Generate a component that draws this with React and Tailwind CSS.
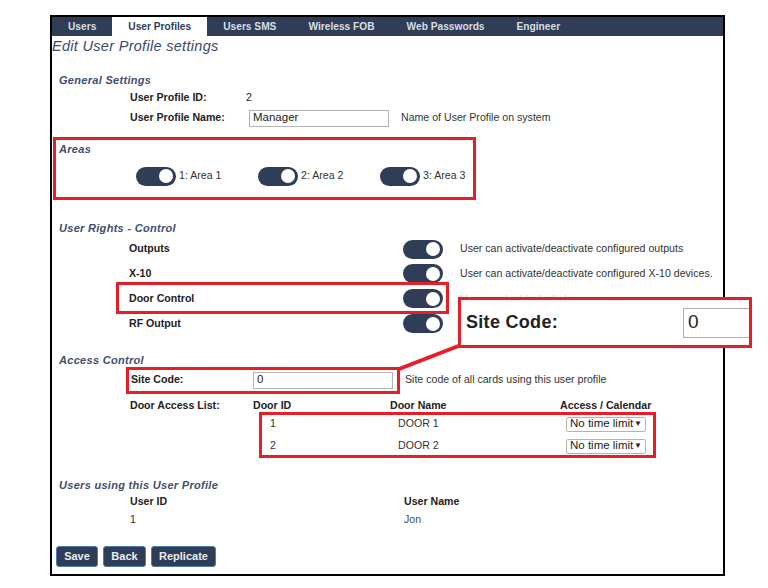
const navy = 'bg-[#2f3d56]';

function Toggle() {
  return (
    <div className="w-[40px] h-[19px] rounded-full bg-[#2f3d56] flex items-center justify-end pr-[3px] shrink-0">
      <div className="w-[14px] h-[14px] rounded-full bg-white" />
    </div>
  );
}

function SectionTitle({ children, className = '' }) {
  return (
    <div className={`h-[16px] flex items-center pl-[7px] text-[11px] font-bold italic text-[#3e4d70] tracking-[0.3px] ${className}`}>
      {children}
    </div>
  );
}

function TimeSelect() {
  return (
    <div className="w-[80px] h-[15px] border border-[#b5b5b5] rounded-[2px] bg-white flex items-center justify-between px-[3px] text-[11.5px] text-[#222]">
      <span>No time limit</span>
      <span className="text-[8px]">▼</span>
    </div>
  );
}

const tabs = ['Users', 'User Profiles', 'Users SMS', 'Wireless FOB', 'Web Passwords', 'Engineer'];

const rights = [
  { label: 'Outputs', desc: 'User can activate/deactivate configured outputs', h: 'h-[24px] mt-[1px]' },
  { label: 'X-10', desc: 'User can activate/deactivate configured X-10 devices.', h: 'h-[25px]' },
  { label: 'Door Control', desc: 'User can lock/unlock doors', h: 'h-[25px]', faded: true },
  { label: 'RF Output', desc: '', h: 'h-[25px]' },
];

export default function App() {
  return (
    <div className="relative w-[768px] h-[588px] bg-white font-['Liberation_Sans',Arial,sans-serif] text-[10.6px] text-[#333] overflow-hidden">
      {/* Frame */}
      <div className="absolute left-[50px] top-[15px] w-[675px] h-[561px] border-2 border-black bg-white flex flex-col">
        {/* Tabs */}
        <div className={`h-[19px] ${navy} flex items-stretch shrink-0`}>
          {tabs.map((t) => (
            <div
              key={t}
              className={`px-[16px] flex items-center text-[10.2px] font-bold ${
                t === 'User Profiles' ? 'bg-white text-[#2f3d56]' : 'text-[#d9dee6]'
              }`}
            >
              {t}
            </div>
          ))}
        </div>

        <div className="h-[22px] flex items-center text-[14.5px] italic text-[#3a4a6e] tracking-[0.3px]">
          Edit User Profile settings
        </div>

        {/* General */}
        <SectionTitle className="mt-[14px]">General Settings</SectionTitle>
        <div className="h-[20px] flex items-center pl-[78px]">
          <div className="w-[116px] font-bold text-[#222]">User Profile ID:</div>
          <div className="text-[#222]">2</div>
        </div>
        <div className="h-[20px] flex items-center pl-[78px]">
          <div className="w-[119px] font-bold text-[#222]">User Profile Name:</div>
          <div className="w-[140px] h-[17px] border border-[#b5b5b5] flex items-center px-[3px] text-[11.5px] text-[#222]">Manager</div>
          <div className="ml-[12px] text-[#333]">Name of User Profile on system</div>
        </div>

        {/* Areas */}
        <SectionTitle className="mt-[13px]">Areas</SectionTitle>
        <div className="h-[20px] mt-[9px] flex items-center pl-[84px]">
          {['1: Area 1', '2: Area 2', '3: Area 3'].map((a) => (
            <div key={a} className="w-[122px] flex items-center gap-[3px]">
              <Toggle />
              <span className="text-[#333]">{a}</span>
            </div>
          ))}
        </div>

        {/* User rights */}
        <SectionTitle className="mt-[34px]">User Rights - Control</SectionTitle>
        {rights.map((r) => (
          <div key={r.label} className={`${r.h} flex items-center pl-[77px]`}>
            <div className="w-[274px] font-bold text-[#222]">{r.label}</div>
            <Toggle />
            {r.desc && (
              <div className={`ml-[17px] ${r.faded ? 'text-[#d0d0d0] mt-[2px]' : 'text-[#333]'}`}>{r.desc}</div>
            )}
          </div>
        ))}

        {/* Access control */}
        <SectionTitle className="mt-[16px]">Access Control</SectionTitle>
        <div className="h-[20px] mt-[2px] flex items-center pl-[79px]">
          <div className="w-[122px] font-bold text-[#222]">Site Code:</div>
          <div className="w-[140px] h-[17px] border border-[#b5b5b5] flex items-center px-[3px] text-[11.5px] text-[#222]">0</div>
          <div className="ml-[12px] text-[#333]">Site code of all cards using this user profile</div>
        </div>
        <div className="h-[18px] mt-[7px] flex items-center pl-[78px] font-bold text-[#222]">
          <div className="w-[123px]">Door Access List:</div>
          <div className="w-[137px]">Door ID</div>
          <div className="w-[170px]">Door Name</div>
          <div>Access / Calendar</div>
        </div>
        {['1', '2'].map((d, i) => (
          <div key={d} className={`h-[18px] flex items-center pl-[218px] text-[#333] ${i ? 'mt-[4px]' : ''}`}>
            <div className="w-[128px]">{d}</div>
            <div className="w-[168px]">DOOR {d}</div>
            <TimeSelect />
          </div>
        ))}

        {/* Users */}
        <SectionTitle className="mt-[22px]">Users using this User Profile</SectionTitle>
        <div className="h-[18px] flex items-center pl-[78px] font-bold text-[#222]">
          <div className="w-[274px]">User ID</div>
          <div>User Name</div>
        </div>
        <div className="h-[18px] flex items-center pl-[78px]">
          <div className="w-[274px] text-[#333]">1</div>
          <div className="text-[#3b5073]">Jon</div>
        </div>

        {/* Buttons */}
        <div className="mt-[17px] pl-[4px] flex gap-[5px]">
          {[['Save', 'w-[42px]'], ['Back', 'w-[43px]'], ['Replicate', 'w-[65px]']].map(([b, w]) => (
            <div
              key={b}
              className={`${w} h-[21px] ${navy} border border-[#4f7bb3] rounded-[3px] flex items-center justify-center text-[11px] font-bold text-[#e8ecf2]`}
            >
              {b}
            </div>
          ))}
        </div>
      </div>

      {/* Annotation boxes */}
      <div className="absolute left-[53px] top-[137px] w-[423px] h-[63px] border-[3px] border-[#e61e28]" />
      <div className="absolute left-[116px] top-[282px] w-[333px] h-[32px] border-[3px] border-[#e61e28]" />
      <div className="absolute left-[126px] top-[367px] w-[274px] h-[27px] border-[3px] border-[#e61e28]" />
      <div className="absolute left-[259px] top-[412px] w-[397px] h-[46px] border-[3px] border-[#e61e28]" />

      <svg className="absolute left-0 top-0" width="768" height="588">
        <line x1="461" y1="345" x2="399" y2="369" stroke="#e61e28" strokeWidth="4" />
      </svg>

      {/* Zoomed callout */}
      <div className="absolute left-[458px] top-[297px] w-[294px] h-[51px] border-[3px] border-[#e61e28] bg-white overflow-hidden flex items-center">
        <div className="pl-[5px] w-[222px] shrink-0 text-[18px] font-bold text-[#222] tracking-[0.3px]">Site Code:</div>
        <div className="w-[100px] h-[30px] border border-[#b0b0b0] shrink-0 flex items-center pl-[4px] text-[19px] text-[#222]">0</div>
      </div>
    </div>
  );
}
